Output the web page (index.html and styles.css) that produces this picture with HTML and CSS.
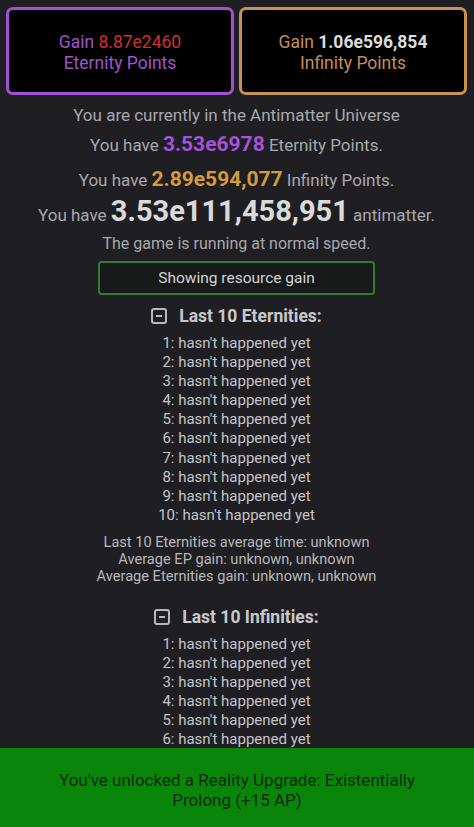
FILE: index.html
```html
<!DOCTYPE html>
<html lang="en">
<head>
  <meta charset="UTF-8" />
  <title>Statistics</title>
  <meta name="viewport" content="width=device-width, initial-scale=1" />
  <link rel="stylesheet" href="styles.css">
</head>
<body>

  <div class="page">
    <div class="content">
      <div class="gain-row">
        <button class="gain-box eternity">
          Gain <span class="gain-red">8.87e2460</span><br />Eternity Points
        </button>
        <button class="gain-box infinity">
          Gain <span class="gain-white">1.06e596,854</span><br />Infinity Points
        </button>
      </div>

      <div class="summary">
        <div class="line">You are currently in the Antimatter Universe</div>
        <div class="line big">You have <span class="num ep">3.53e6978</span> Eternity Points.</div>
        <div class="line big">You have <span class="num ip">2.89e594,077</span> Infinity Points.</div>
        <div class="line huge">You have <span class="num am">3.53e111,458,951</span> antimatter.</div>
        <div class="line small">The game is running at normal speed.</div>
        <button class="toggle">Showing resource gain</button>
      </div>

      <div class="runs">
        <h3 class="runs-title"><span class="collapse"></span>Last 10 Eternities:</h3>
        <div class="run-list">
          <div>1: hasn't happened yet</div>
          <div>2: hasn't happened yet</div>
          <div>3: hasn't happened yet</div>
          <div>4: hasn't happened yet</div>
          <div>5: hasn't happened yet</div>
          <div>6: hasn't happened yet</div>
          <div>7: hasn't happened yet</div>
          <div>8: hasn't happened yet</div>
          <div>9: hasn't happened yet</div>
          <div>10: hasn't happened yet</div>
        </div>
        <div class="run-stats">
          <div>Last 10 Eternities average time: unknown</div>
          <div>Average EP gain: unknown, unknown</div>
          <div>Average Eternities gain: unknown, unknown</div>
        </div>
      </div>

      <div class="runs">
        <h3 class="runs-title"><span class="collapse"></span>Last 10 Infinities:</h3>
        <div class="run-list">
          <div>1: hasn't happened yet</div>
          <div>2: hasn't happened yet</div>
          <div>3: hasn't happened yet</div>
          <div>4: hasn't happened yet</div>
          <div>5: hasn't happened yet</div>
          <div>6: hasn't happened yet</div>
        </div>
      </div>
    </div>

    <div class="notify">
      You've unlocked a Reality Upgrade: Existentially Prolong (+15 AP)
    </div>
  </div>

</body>
</html>
```

FILE: styles.css
```css
* { box-sizing: border-box; }
html, body {
  margin: 0; padding: 0;
  background: #1f1f23;
  font-family: Roboto, 'Noto Sans', sans-serif;
  color: #a8a8ac;
}
.page {
  height: 100vh;
  display: flex; flex-direction: column;
}
.content {
  flex: 1; overflow: hidden;
  padding: 7px 7px 0 6px;
}

.gain-row {
  display: flex; gap: 5px;
}
.gain-box {
  flex: 1; height: 88px;
  background: #000;
  border: 3px solid; border-radius: 7px;
  font-family: inherit; font-size: 17.5px;
  line-height: 21px;
  padding: 4px 0 0;
}
.gain-box.eternity { border-color: #a64fd4; color: #9d57c9; }
.gain-box.infinity { border-color: #c99250; color: #c48e55; }
.gain-red { color: #d0312d; }
.gain-white { color: #dcdcdc; font-weight: 700; }

.summary {
  display: flex; flex-direction: column;
  align-items: center; text-align: center;
  padding-top: 10px;
}
.line { font-size: 17px; line-height: 20px; }
.line.big { line-height: 30px; margin-top: 4px; }
.line.big + .line.big { margin-top: 4px; }
.line.huge { line-height: 34px; margin-top: -1px; }
.line.small { font-size: 16px; line-height: 20px; margin-top: 2px; }
.num { font-weight: 700; }
.num.ep { color: #a453d8; font-size: 21px; }
.num.ip { color: #d39b3c; font-size: 21px; }
.num.am { color: #dadada; font-size: 29px; }

.toggle {
  margin-top: 7px;
  width: 277px; height: 34px;
  background: #18191a;
  border: 2px solid #2f7d32; border-radius: 4px;
  color: #d4d4d4;
  font-family: inherit; font-size: 15.5px;
}

.runs { text-align: center; }
.runs-title {
  margin: 6px 0 0; line-height: 30px;
  font-size: 17.5px; font-weight: 700;
  color: #c8c8cc;
  display: flex; justify-content: center; align-items: center;
  gap: 12px;
}
.runs + .runs .runs-title { margin-top: 17px; }
.collapse {
  width: 16px; height: 16px;
  border: 2px solid #b8b8bc; border-radius: 3px;
  display: flex; align-items: center; justify-content: center;
}
.collapse::before {
  content: ""; width: 6px; height: 2px;
  background: #b8b8bc;
}
.run-list {
  font-size: 15px; line-height: 19.1px;
  color: #c4c4c8;
  margin-top: 3px;
}
.run-stats {
  margin-top: 9px;
  font-size: 14.6px; line-height: 17px;
  color: #b8b8bc;
}

.notify {
  flex: none; height: 79px;
  background: #098509;
  color: #0e2a0e;
  font-size: 17px; line-height: 20px;
  text-align: center;
  padding: 22px 50px 0;
}
```
